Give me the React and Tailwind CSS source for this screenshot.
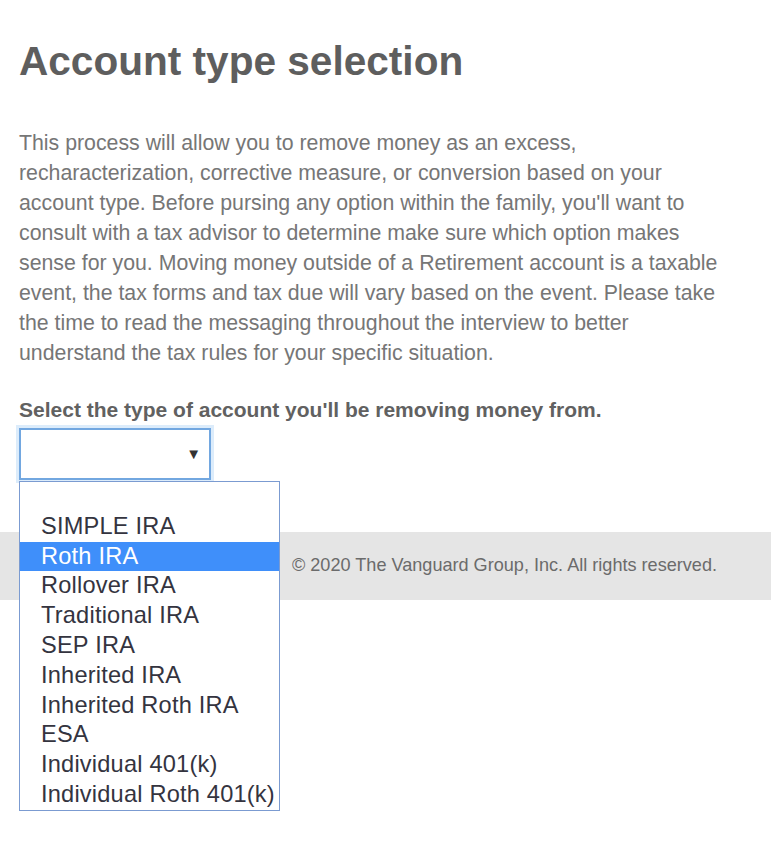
import { useState } from 'react';

const accountTypes = [
  '',
  'SIMPLE IRA',
  'Roth IRA',
  'Rollover IRA',
  'Traditional IRA',
  'SEP IRA',
  'Inherited IRA',
  'Inherited Roth IRA',
  'ESA',
  'Individual 401(k)',
  'Individual Roth 401(k)',
];

export default function App() {
  const [hovered, setHovered] = useState('Roth IRA');

  return (
    <div className="min-h-[864px] bg-white font-['Liberation_Sans',Arial,sans-serif]">
      <main className="px-[19px] pt-[36px]">
        <h1 className="text-[40.6px] leading-[50px] font-bold text-[#5e5e5e]">Account type selection</h1>

        <p className="mt-[42px] text-[21.3px] leading-[30px] text-[#767676] whitespace-nowrap">
          This process will allow you to remove money as an excess,<br />
          recharacterization, corrective measure, or conversion based on your<br />
          account type. Before pursing any option within the family, you'll want to<br />
          consult with a tax advisor to determine make sure which option makes<br />
          sense for you. Moving money outside of a Retirement account is a taxable<br />
          event, the tax forms and tax due will vary based on the event. Please take<br />
          the time to read the messaging throughout the interview to better<br />
          understand the tax rules for your specific situation.
        </p>

        <label className="block mt-[29px] text-[21px] leading-[26px] font-bold text-[#616161]">
          Select the type of account you'll be removing money from.
        </label>

        <div className="relative mt-[5px] w-[192px]">
          <div className="h-[52px] border-2 border-[#72a7e0] shadow-[0_0_0_3px_#dcecfb] bg-white flex items-center justify-end pr-[8px]">
            <span className="text-[15px] text-[#333]">▼</span>
          </div>

          {/* open option list of the select */}
          <ul className="absolute left-0 top-[53px] z-10 w-[261px] border border-[#7b9bd1] bg-white">
            {accountTypes.map((t, i) => (
              <li
                key={i}
                onMouseEnter={() => t && setHovered(t)}
                className={`h-[29.8px] leading-[29px] pl-[21px] text-[23.6px] tracking-[0.2px] whitespace-nowrap ${
                  t === hovered ? 'bg-[#3f8ffa] text-white' : 'text-[#34343f]'
                }`}
              >
                {t}
              </li>
            ))}
          </ul>
        </div>
      </main>

      <footer className="mt-[52px] h-[68px] bg-[#e5e5e5] flex items-center justify-end pr-[54px]">
        <p className="text-[18.1px] text-[#6b6b6b]">© 2020 The Vanguard Group, Inc. All rights reserved.</p>
      </footer>
    </div>
  );
}
